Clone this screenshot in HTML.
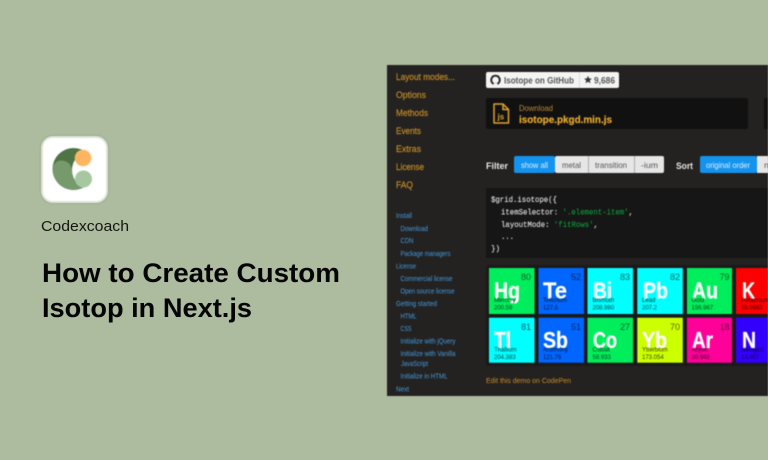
<!DOCTYPE html>
<html lang="en">
<head>
<meta charset="utf-8">
<title>How to Create Custom Isotop in Next.js</title>
<style>
html,body{margin:0;padding:0;width:768px;height:460px;overflow:hidden;background:#adbb9f}
svg{display:block}
text{font-family:"Liberation Sans",sans-serif}
.panel{filter:blur(.45px)}
.logo{filter:blur(.4px)}
.o{fill:#c78e28;font-size:9.5px;stroke:#c78e28;stroke-width:.15}
.b{fill:#409ae0;font-size:7.5px}
.code{font-family:"Liberation Mono",monospace;font-size:8.5px;fill:#e2e2e2;stroke:#e2e2e2;stroke-width:.12}
.g{fill:#0f9a3c;stroke:#0f9a3c}
.sym{fill:#fff;font-size:23px;font-weight:700;stroke:#fff;stroke-width:.25}
.num{font-size:9px;fill:#000;fill-opacity:.6;text-anchor:end}
.nm{font-size:6px;fill:#000;fill-opacity:.75}
</style>
</head>
<body>
<svg width="768" height="460" viewBox="0 0 768 460" xmlns="http://www.w3.org/2000/svg">
<rect width="768" height="460" fill="#adbb9f"/>

<!-- logo -->
<g class="logo">
<rect x="40" y="135" width="69" height="69" rx="13" fill="#99a98b"/>
<rect x="41" y="136" width="67" height="67" rx="12" fill="#dfe6d8"/>
<rect x="43" y="138" width="63" height="63" rx="10" fill="#fff"/>
<defs>
<clipPath id="cc"><circle cx="73.500" cy="169" r="21"/></clipPath>
<clipPath id="ct"><rect x="43" y="138" width="63" height="63"/></clipPath>
</defs>
<g clip-path="url(#cc)">
<rect x="50" y="146" width="48" height="48" fill="#4f7344"/>
<path d="M50 172C53 165 56 160.500 61 160.500C68 160.500 72 165 72 172L90 195L50 195Z" fill="#769a6c"/>
</g>
<circle cx="91" cy="170" r="19" fill="#fff" clip-path="url(#ct)"/>
<circle cx="83" cy="158" r="8.300" fill="#fdb561"/>
<circle cx="83.500" cy="179" r="8.500" fill="#a6c7a0"/>
</g>

<text x="41" y="231" font-size="15" fill="#15170f" textLength="88" lengthAdjust="spacingAndGlyphs">Codexcoach</text>
<text x="42" y="282" font-size="26.500" font-weight="700" fill="#050505" textLength="298" lengthAdjust="spacingAndGlyphs">How to Create Custom</text>
<text x="42" y="317" font-size="26.500" font-weight="700" fill="#050505" textLength="210" lengthAdjust="spacingAndGlyphs">Isotop in Next.js</text>

<!-- right panel -->
<g class="panel">
<rect x="387" y="65" width="381" height="331" fill="#242220"/>

<text class="o" x="396" y="80" textLength="59" lengthAdjust="spacingAndGlyphs">Layout modes...</text>
<text class="o" x="396" y="98" textLength="30" lengthAdjust="spacingAndGlyphs">Options</text>
<text class="o" x="396" y="116" textLength="32" lengthAdjust="spacingAndGlyphs">Methods</text>
<text class="o" x="396" y="134" textLength="25" lengthAdjust="spacingAndGlyphs">Events</text>
<text class="o" x="396" y="152" textLength="25" lengthAdjust="spacingAndGlyphs">Extras</text>
<text class="o" x="396" y="170" textLength="28" lengthAdjust="spacingAndGlyphs">License</text>
<text class="o" x="396" y="188" textLength="17" lengthAdjust="spacingAndGlyphs">FAQ</text>

<text class="b" x="396" y="218" textLength="16" lengthAdjust="spacingAndGlyphs">Install</text>
<text class="b" x="400.500" y="231" textLength="27.500" lengthAdjust="spacingAndGlyphs">Download</text>
<text class="b" x="400.500" y="243" textLength="13" lengthAdjust="spacingAndGlyphs">CDN</text>
<text class="b" x="400.500" y="256" textLength="50" lengthAdjust="spacingAndGlyphs">Package managers</text>
<text class="b" x="396" y="268.500" textLength="20" lengthAdjust="spacingAndGlyphs">License</text>
<text class="b" x="400.500" y="281" textLength="52" lengthAdjust="spacingAndGlyphs">Commercial license</text>
<text class="b" x="400.500" y="293.500" textLength="54" lengthAdjust="spacingAndGlyphs">Open source license</text>
<text class="b" x="396" y="306" textLength="41" lengthAdjust="spacingAndGlyphs">Getting started</text>
<text class="b" x="400.500" y="318.500" textLength="16" lengthAdjust="spacingAndGlyphs">HTML</text>
<text class="b" x="400.500" y="331" textLength="11" lengthAdjust="spacingAndGlyphs">CSS</text>
<text class="b" x="400.500" y="343.500" textLength="55" lengthAdjust="spacingAndGlyphs">Initialize with jQuery</text>
<text class="b" x="400.500" y="356" textLength="55" lengthAdjust="spacingAndGlyphs">Initialize with Vanilla</text>
<text class="b" x="401" y="366" textLength="27" lengthAdjust="spacingAndGlyphs">JavaScript</text>
<text class="b" x="400.500" y="378.500" textLength="47" lengthAdjust="spacingAndGlyphs">Initialize in HTML</text>
<text class="b" x="396" y="391.500" textLength="13" lengthAdjust="spacingAndGlyphs">Next</text>

<!-- github button -->
<rect x="486" y="72" width="133" height="16" rx="2" fill="#f4f4f4"/>
<rect x="579" y="72" width="1" height="16" fill="#ddd"/>
<circle cx="495.500" cy="80" r="4.300" fill="none" stroke="#222" stroke-width="1.900"/>
<rect x="493.500" y="83.300" width="4" height="2.500" fill="#f4f4f4"/>
<path d="M492.500 75.500l1 1.500M498.500 75.500l-1 1.500" stroke="#222" stroke-width="1"/>
<text x="504" y="83.500" font-size="9" font-weight="700" fill="#555" textLength="70" lengthAdjust="spacingAndGlyphs">Isotope on GitHub</text>
<path d="M588 75.800l1.100 2.600 2.800.2-2.100 1.800.7 2.800-2.500-1.500-2.500 1.500.7-2.800-2.100-1.800 2.800-.2z" fill="#333"/>
<text x="594" y="83.500" font-size="9" font-weight="700" fill="#555" textLength="21" lengthAdjust="spacingAndGlyphs">9,686</text>

<!-- download -->
<rect x="486" y="98" width="262" height="31" rx="2" fill="#111"/>
<rect x="764" y="98" width="4" height="31" fill="#111"/>
<path d="M494 104h9l5.500 5.500v13.500h-14.500z" fill="none" stroke="#e0a02c" stroke-width="1.500" stroke-linejoin="round"/>
<path d="M503 104v5.500h5.500" fill="none" stroke="#e0a02c" stroke-width="1.500"/>
<text x="497.500" y="119.500" font-size="8" font-weight="700" fill="#e0a02c">js</text>
<text x="519" y="111" font-size="8" fill="#b98a30" textLength="34" lengthAdjust="spacingAndGlyphs">Download</text>
<text x="519" y="123" font-size="10.500" font-weight="700" fill="#e9aa30" stroke="#e9aa30" stroke-width=".2" textLength="93" lengthAdjust="spacingAndGlyphs">isotope.pkgd.min.js</text>

<!-- filter -->
<text x="486" y="169" font-size="9.500" font-weight="700" fill="#e8e8e8" textLength="22" lengthAdjust="spacingAndGlyphs">Filter</text>
<rect x="514" y="156" width="41" height="17" rx="2" fill="#1393ee"/>
<rect x="555" y="156" width="109" height="17" rx="2" fill="#e6e6e6"/>
<rect x="588" y="156" width="1" height="17" fill="#aaa"/>
<rect x="634" y="156" width="1" height="17" fill="#aaa"/>
<text x="521" y="168" font-size="8.500" fill="#dff0fb" textLength="27" lengthAdjust="spacingAndGlyphs">show all</text>
<text x="562" y="168" font-size="8.500" fill="#555" textLength="19" lengthAdjust="spacingAndGlyphs">metal</text>
<text x="595" y="168" font-size="8.500" fill="#555" textLength="32" lengthAdjust="spacingAndGlyphs">transition</text>
<text x="641" y="168" font-size="8.500" fill="#555" textLength="17" lengthAdjust="spacingAndGlyphs">-ium</text>

<text x="676" y="169" font-size="9.500" font-weight="700" fill="#e8e8e8" textLength="17" lengthAdjust="spacingAndGlyphs">Sort</text>
<rect x="700" y="156" width="57" height="17" rx="2" fill="#1393ee"/>
<rect x="757" y="156" width="11" height="17" fill="#e6e6e6"/>
<text x="706" y="168" font-size="8.500" fill="#dff0fb" textLength="44" lengthAdjust="spacingAndGlyphs">original order</text>
<text x="764" y="168" font-size="8.500" fill="#555">n</text>

<!-- code -->
<rect x="486" y="188" width="282" height="70" fill="#161616"/>
<text class="code" x="491" y="202" textLength="66" lengthAdjust="spacingAndGlyphs">$grid.isotope({</text>
<text class="code" x="501" y="214.500" textLength="132" lengthAdjust="spacingAndGlyphs">itemSelector: <tspan class="g">'.element-item'</tspan>,</text>
<text class="code" x="501" y="227" textLength="97" lengthAdjust="spacingAndGlyphs">layoutMode: <tspan class="g">'fitRows'</tspan>,</text>
<text class="code" x="501" y="239" textLength="13" lengthAdjust="spacingAndGlyphs">...</text>
<text class="code" x="491" y="251" textLength="9" lengthAdjust="spacingAndGlyphs">})</text>

<!-- grid -->
<rect x="486" y="265" width="282" height="101" fill="#1a1a1a"/>

<rect x="489" y="268" width="45.500" height="46" fill="#00ee5c"/>
<text class="sym" x="494" y="298.500" textLength="26" lengthAdjust="spacingAndGlyphs">Hg</text>
<text class="num" x="531" y="280">80</text>
<text class="nm" x="494" y="302">Mercury</text>
<text class="nm" x="494" y="309.500">200.59</text>

<rect x="538.500" y="268" width="45.500" height="46" fill="#0066ff"/>
<text class="sym" x="543" y="298.500" textLength="24" lengthAdjust="spacingAndGlyphs">Te</text>
<text class="num" x="581" y="280">52</text>
<text class="nm" x="543" y="302">Tellurium</text>
<text class="nm" x="543" y="309.500">127.6</text>

<rect x="587.500" y="268" width="45.500" height="46" fill="#00ffff"/>
<text class="sym" x="593" y="298.500" textLength="19" lengthAdjust="spacingAndGlyphs">Bi</text>
<text class="num" x="630" y="280">83</text>
<text class="nm" x="592.500" y="302">Bismuth</text>
<text class="nm" x="592.500" y="309.500">208.980</text>

<rect x="637.300" y="268" width="45.500" height="46" fill="#00ffff"/>
<text class="sym" x="643" y="298.500" textLength="25" lengthAdjust="spacingAndGlyphs">Pb</text>
<text class="num" x="680" y="280">82</text>
<text class="nm" x="642" y="302">Lead</text>
<text class="nm" x="642" y="309.500">207.2</text>

<rect x="687" y="268" width="45" height="46" fill="#00ee5c"/>
<text class="sym" x="692" y="298.500" textLength="26" lengthAdjust="spacingAndGlyphs">Au</text>
<text class="num" x="729.500" y="280">79</text>
<text class="nm" x="691.500" y="302">Gold</text>
<text class="nm" x="691.500" y="309.500">196.967</text>

<rect x="736" y="268" width="32" height="46" fill="#ff0000"/>
<text class="sym" x="742" y="298.500" textLength="13" lengthAdjust="spacingAndGlyphs">K</text>
<text class="nm" x="741" y="302">Potassium</text>
<text class="nm" x="741" y="309.500">39.0983</text>

<rect x="489" y="317.700" width="45.500" height="45" fill="#00ffff"/>
<text class="sym" x="494" y="348" textLength="17" lengthAdjust="spacingAndGlyphs">Tl</text>
<text class="num" x="531" y="330">81</text>
<text class="nm" x="494" y="351.500">Thallium</text>
<text class="nm" x="494" y="359">204.383</text>

<rect x="538.500" y="317.700" width="45.500" height="45" fill="#0066ff"/>
<text class="sym" x="543" y="348" textLength="25" lengthAdjust="spacingAndGlyphs">Sb</text>
<text class="num" x="581" y="330">51</text>
<text class="nm" x="543" y="351.500">Antimony</text>
<text class="nm" x="543" y="359">121.76</text>

<rect x="587.500" y="317.700" width="45.500" height="45" fill="#00ee5c"/>
<text class="sym" x="593" y="348" textLength="24" lengthAdjust="spacingAndGlyphs">Co</text>
<text class="num" x="630" y="330">27</text>
<text class="nm" x="592.500" y="351.500">Cobalt</text>
<text class="nm" x="592.500" y="359">58.933</text>

<rect x="637.300" y="317.700" width="45.500" height="45" fill="#ccff00"/>
<text class="sym" x="642" y="348" textLength="25" lengthAdjust="spacingAndGlyphs">Yb</text>
<text class="num" x="680" y="330">70</text>
<text class="nm" x="642" y="351.500">Ytterbium</text>
<text class="nm" x="642" y="359">173.054</text>

<rect x="687" y="317.700" width="45" height="45" fill="#ff0099"/>
<text class="sym" x="692" y="348" textLength="21" lengthAdjust="spacingAndGlyphs">Ar</text>
<text class="num" x="729.500" y="330">18</text>
<text class="nm" x="691.500" y="351.500">Argon</text>
<text class="nm" x="691.500" y="359">39.948</text>

<rect x="736" y="317.700" width="32" height="45" fill="#3300ff"/>
<text class="sym" x="742" y="348" textLength="14" lengthAdjust="spacingAndGlyphs">N</text>
<text class="nm" x="741" y="351.500">Nitrogen</text>
<text class="nm" x="741" y="359">14.007</text>

<text x="486" y="383" font-size="7.500" fill="#c78e28" textLength="85" lengthAdjust="spacingAndGlyphs">Edit this demo on CodePen</text>
</g>
</svg>
</body>
</html>
